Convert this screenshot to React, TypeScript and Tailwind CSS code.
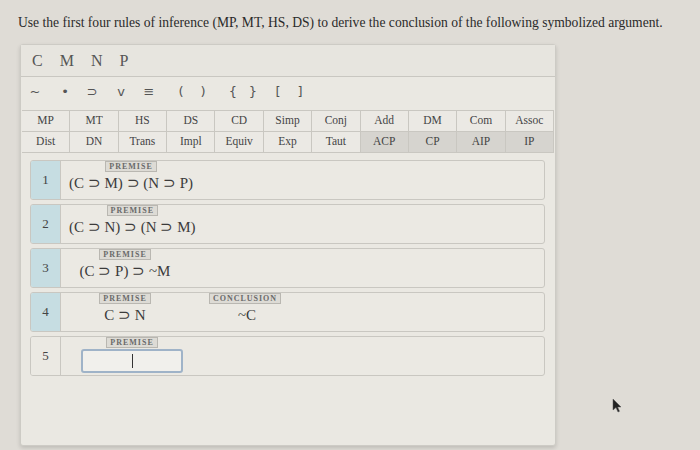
import React from "react";

const row1 = ["MP", "MT", "HS", "DS", "CD", "Simp", "Conj", "Add", "DM", "Com", "Assoc"];
const row2 = ["Dist", "DN", "Trans", "Impl", "Equiv", "Exp", "Taut", "ACP", "CP", "AIP", "IP"];
const symbols = ["~", "•", "⊃", "v", "≡", "(", ")", "{", "}", "[", "]"];
const symbolGaps = ["ml-0", "ml-[10px]", "ml-[7px]", "ml-[9px]", "ml-[8px]", "ml-[12px]", "ml-[2px]", "ml-[10px]", "ml-0", "ml-[5px]", "ml-[2px]"];

function Label({ text }: { text: string }) {
  return (
    <div className="border border-[#b9b7b1] bg-[#dddbd5] px-[3px] text-[8px] leading-[9px] tracking-[1px] text-[#6a6a6a] font-bold">
      {text}
    </div>
  );
}

function Cell({ label, children }: { label: string; children: React.ReactNode }) {
  return (
    <div className="flex min-w-[112px] flex-col items-center">
      <Label text={label} />
      <div className="text-[15px] leading-[22px] text-[#3b3b3b] whitespace-nowrap">{children}</div>
    </div>
  );
}

function Line({ n, blue, children }: { n: number; blue?: boolean; children: React.ReactNode }) {
  return (
    <div className="flex h-[40px] rounded-[3px] border border-[#c9c7c1] bg-[#ebe9e3] overflow-hidden">
      <div
        className={
          "flex w-[30px] items-center justify-center border-r border-[#c9c7c1] text-[13px] text-[#444] " +
          (blue ? "bg-[#c6dde2]" : "bg-[#ebe9e3]")
        }
      >
        {n}
      </div>
      <div className="flex gap-2 pl-2">{children}</div>
    </div>
  );
}

export default function App() {
  return (
    <div
      className="relative h-[450px] w-[700px] overflow-hidden bg-[#dfdcd6] text-[#333]"
      style={{ fontFamily: '"Liberation Serif", "Times New Roman", serif' }}
    >
      <div className="px-[18px] pt-[15px] text-[13.6px] leading-[16px] text-[#2a2a2a]">
        Use the first four rules of inference (MP, MT, HS, DS) to derive the conclusion of the following symbolized argument.
      </div>

      <div className="ml-[20px] mt-[13px] h-[402px] w-[536px] rounded-[3px] border border-[#cdcbc5] bg-[#eae8e2] shadow-[0_2px_4px_rgba(0,0,0,0.15)]">
        <div className="flex h-[32px] items-center gap-[17px] border-b border-[#c9c7c1] bg-[#e7e5df] pl-[11px] text-[16px] text-[#555]">
          <span>C</span>
          <span>M</span>
          <span>N</span>
          <span>P</span>
        </div>

        <div
          className="flex h-[30px] items-center pl-[4px] text-[13px] text-[#555]"
          style={{ fontFamily: '"DejaVu Sans", sans-serif' }}
        >
          {symbols.map((s, i) => (
            <span key={i} className={"inline-block w-[20px] text-center " + symbolGaps[i]}>
              {s}
            </span>
          ))}
        </div>

        <div className="mx-[1px] mt-[3px] grid grid-cols-11 border-t border-[#c9c7c1] text-[11.5px] text-[#444]">
          {row1.map((r) => (
            <div key={r} className="flex h-[21px] items-center justify-center border-b border-r border-[#c9c7c1] bg-[#ebe9e4]">
              {r}
            </div>
          ))}
          {row2.map((r, i) => (
            <div
              key={r}
              className={
                "flex h-[21px] items-center justify-center border-b border-r border-[#c9c7c1] " +
                (i >= 7 ? "bg-[#d6d4cf]" : "bg-[#ebe9e4]")
              }
            >
              {r}
            </div>
          ))}
        </div>

        <div className="flex flex-col gap-[4px] pl-[9px] pr-[10px] pt-[7px]">
          <Line n={1} blue>
            <Cell label="PREMISE">(C ⊃ M) ⊃ (N ⊃ P)</Cell>
          </Line>
          <Line n={2} blue>
            <Cell label="PREMISE">(C ⊃ N) ⊃ (N ⊃ M)</Cell>
          </Line>
          <Line n={3} blue>
            <Cell label="PREMISE">(C ⊃ P) ⊃ ~M</Cell>
          </Line>
          <Line n={4} blue>
            <Cell label="PREMISE">C ⊃ N</Cell>
            <Cell label="CONCLUSION">
              <span className="pl-1">~C</span>
            </Cell>
          </Line>
          <Line n={5}>
            <div className="flex min-w-[126px] flex-col items-center">
              <Label text="PREMISE" />
              <div className="mt-[1px] flex h-[24px] w-[102px] items-center justify-center rounded-[3px] border-2 border-[#9fb3c8] bg-[#f1f0ec]">
                <div className="h-[14px] w-[1px] bg-[#333]" />
              </div>
            </div>
          </Line>
        </div>
      </div>

      <svg className="absolute left-[612px] top-[398px]" width="10" height="16" viewBox="0 0 10 16">
        <path d="M1 1 L1 12 L4 9.5 L6 14 L7.5 13.3 L5.6 9 L9 9 Z" fill="#222" stroke="#555" strokeWidth="0.5" />
      </svg>
    </div>
  );
}
